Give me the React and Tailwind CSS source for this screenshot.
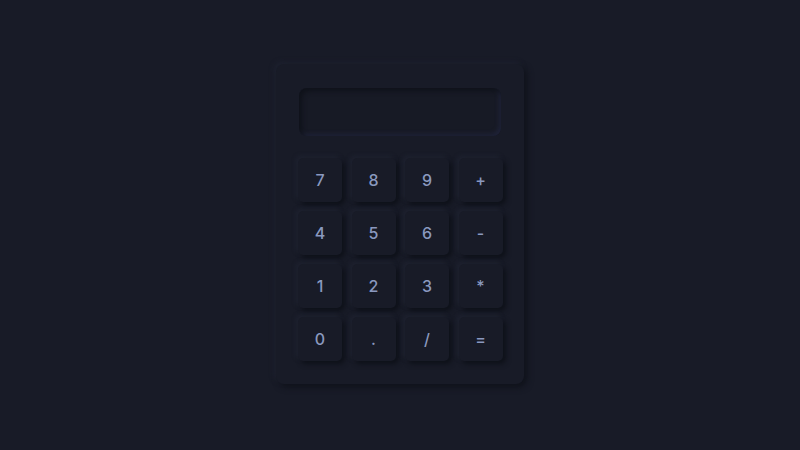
import React from "react";

const keys = ["7", "8", "9", "+", "4", "5", "6", "-", "1", "2", "3", "*", "0", ".", "/", "="];

export default function App() {
  return (
    <div
      className="w-[800px] h-[450px] bg-[#181b27] flex items-start justify-center pt-[64px]"
      style={{ fontFamily: "Inter, 'Open Sans', sans-serif" }}
    >
      <div className="w-[248px] h-[320px] rounded-[8px] bg-[#181b27] pl-[22px] pt-[24px] shadow-[3px_3px_6px_#0f121a,-2px_-2px_5px_#1f2331]">
        <div className="ml-[1px] w-[202px] h-[48px] rounded-[8px] bg-[#171a25] shadow-[inset_3px_3px_5px_#0f121a,inset_-2px_-2px_4px_#20243a]" />
        <div className="mt-[22px] grid grid-cols-[44px_44px_44px_44px] gap-x-[9.5px] gap-y-[9px]">
          {keys.map((k) => (
            <button
              key={k}
              className="w-[44px] h-[44px] rounded-[5px] bg-[#181b27] flex items-center justify-center text-[16px] font-medium text-[#8a99bf] shadow-[3px_3px_5px_#0e1119,-2px_-2px_4px_#1f2331]"
            >
              {k}
            </button>
          ))}
        </div>
      </div>
    </div>
  );
}
